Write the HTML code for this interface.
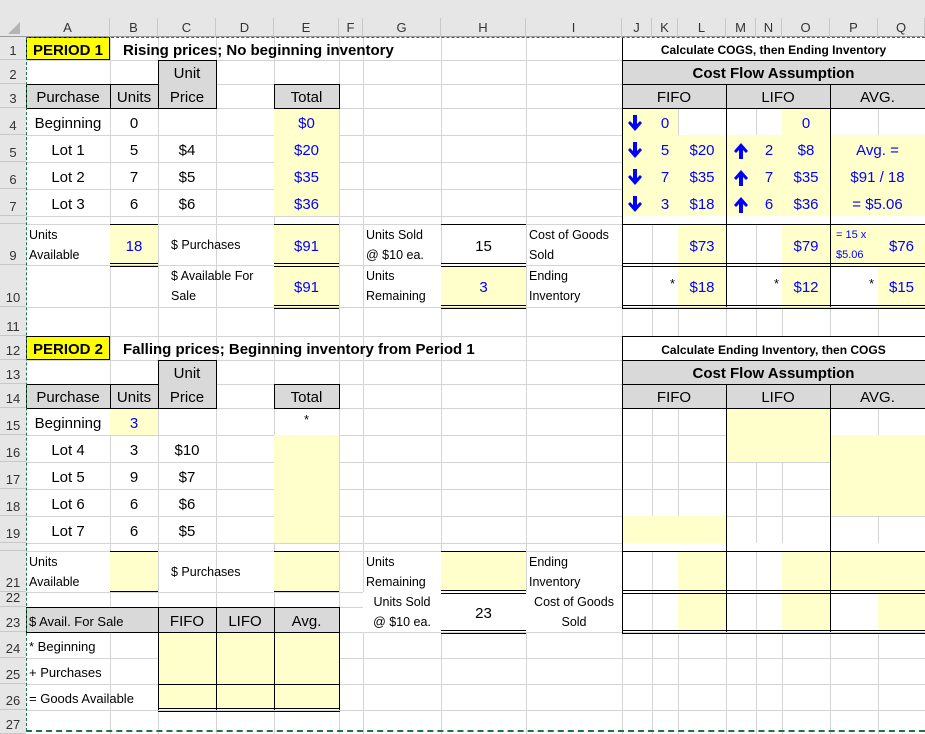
<!DOCTYPE html>
<html><head><meta charset="utf-8"><style>
*{margin:0;padding:0;box-sizing:border-box}
body{width:925px;height:734px;position:relative;overflow:hidden;background:#fff;font-family:"Liberation Sans",Arial,sans-serif;color:#000}
div{position:absolute}
.v{width:1px;background:#d4d4d4;top:37px;height:697px}
.h{height:1px;background:#d4d4d4;left:0;width:925px}
.c{display:flex;align-items:center;justify-content:center;font-size:15px;white-space:nowrap;padding-top:3px}
.l{justify-content:flex-start;padding-left:3px}
.s{font-size:12.5px;line-height:20px;white-space:pre;justify-content:flex-start;padding-left:3px;padding-top:0}
.b{color:#0000ff}
.y{background:#ffffcc}
.g{background:#d9d9d9}
.bx{border:1px solid #000}
.k{background:#000}
.dbl{border-top:1px solid #000;border-bottom:1px solid #000;height:4px}
.ch{top:18px;height:19px;font-size:13px;color:#333;display:flex;align-items:center;justify-content:center;border-right:1px solid #c8c8c8}
.rn{left:0;width:26px;font-size:13px;color:#333;display:flex;align-items:flex-end;justify-content:center;padding-bottom:1px;border-bottom:1px solid #c8c8c8;background:#e6e6e6}
</style></head><body>
<div style="left:0;top:0;width:925px;height:37px;background:#e6e6e6;border-bottom:1px solid #9a9a9a"></div>
<div style="left:0;top:37px;width:26px;height:697px;background:#e6e6e6"></div>

<div class="v" style="left:110px"></div><div class="v" style="left:158px"></div><div class="v" style="left:216px"></div><div class="v" style="left:274px"></div><div class="v" style="left:339px"></div><div class="v" style="left:363px"></div><div class="v" style="left:441px"></div><div class="v" style="left:526px"></div><div class="v" style="left:622px"></div><div class="v" style="left:652px"></div><div class="v" style="left:678px"></div><div class="v" style="left:726px"></div><div class="v" style="left:756px"></div><div class="v" style="left:782px"></div><div class="v" style="left:830px"></div><div class="v" style="left:878px"></div>
<div class="h" style="top:60px"></div><div class="h" style="top:84px"></div><div class="h" style="top:108px"></div><div class="h" style="top:135px"></div><div class="h" style="top:162px"></div><div class="h" style="top:189px"></div><div class="h" style="top:216px"></div><div class="h" style="top:224px"></div><div class="h" style="top:265px"></div><div class="h" style="top:307px"></div><div class="h" style="top:336px"></div><div class="h" style="top:360px"></div><div class="h" style="top:384px"></div><div class="h" style="top:408px"></div><div class="h" style="top:435px"></div><div class="h" style="top:462px"></div><div class="h" style="top:489px"></div><div class="h" style="top:516px"></div><div class="h" style="top:543px"></div><div class="h" style="top:551px"></div><div class="h" style="top:592px"></div><div class="h" style="top:607px"></div><div class="h" style="top:632px"></div><div class="h" style="top:658px"></div><div class="h" style="top:684px"></div><div class="h" style="top:710px"></div>

<div class="ch" style="left:26px;width:84px">A</div><div class="ch" style="left:110px;width:48px">B</div><div class="ch" style="left:158px;width:58px">C</div><div class="ch" style="left:216px;width:58px">D</div><div class="ch" style="left:274px;width:65px">E</div><div class="ch" style="left:339px;width:24px">F</div><div class="ch" style="left:363px;width:78px">G</div><div class="ch" style="left:441px;width:85px">H</div><div class="ch" style="left:526px;width:96px">I</div><div class="ch" style="left:622px;width:30px">J</div><div class="ch" style="left:652px;width:26px">K</div><div class="ch" style="left:678px;width:48px">L</div><div class="ch" style="left:726px;width:30px">M</div><div class="ch" style="left:756px;width:26px">N</div><div class="ch" style="left:782px;width:48px">O</div><div class="ch" style="left:830px;width:48px">P</div><div class="ch" style="left:878px;width:47px">Q</div>
<div style="left:8px;top:22px;width:0;height:0;border-left:12px solid transparent;border-bottom:12px solid #b4b4b4"></div>

<div class="rn" style="top:37px;height:23px">1</div><div class="rn" style="top:60px;height:24px">2</div><div class="rn" style="top:84px;height:24px">3</div><div class="rn" style="top:108px;height:27px">4</div><div class="rn" style="top:135px;height:27px">5</div><div class="rn" style="top:162px;height:27px">6</div><div class="rn" style="top:189px;height:27px">7</div><div class="rn" style="top:216px;height:8px"></div><div class="rn" style="top:224px;height:41px">9</div><div class="rn" style="top:265px;height:42px">10</div><div class="rn" style="top:307px;height:29px">11</div><div class="rn" style="top:336px;height:24px">12</div><div class="rn" style="top:360px;height:24px">13</div><div class="rn" style="top:384px;height:24px">14</div><div class="rn" style="top:408px;height:27px">15</div><div class="rn" style="top:435px;height:27px">16</div><div class="rn" style="top:462px;height:27px">17</div><div class="rn" style="top:489px;height:27px">18</div><div class="rn" style="top:516px;height:27px">19</div><div class="rn" style="top:543px;height:8px"></div><div class="rn" style="top:551px;height:41px">21</div><div class="rn" style="top:592px;height:15px">22</div><div class="rn" style="top:607px;height:25px">23</div><div class="rn" style="top:632px;height:26px">24</div><div class="rn" style="top:658px;height:26px">25</div><div class="rn" style="top:684px;height:26px">26</div><div class="rn" style="top:710px;height:24px">27</div>

<div class="y" style="left:274px;top:108px;width:65px;height:108px"></div>
<div class="y" style="left:110px;top:224px;width:48px;height:41px"></div>
<div class="y" style="left:274px;top:224px;width:65px;height:83px"></div>
<div class="y" style="left:441px;top:265px;width:85px;height:42px"></div>
<div class="y" style="left:622px;top:108px;width:56px;height:27px"></div>
<div class="y" style="left:622px;top:135px;width:104px;height:81px"></div>
<div class="y" style="left:782px;top:108px;width:48px;height:27px"></div>
<div class="y" style="left:726px;top:135px;width:104px;height:81px"></div>
<div class="y" style="left:830px;top:135px;width:95px;height:81px"></div>
<div style="left:622px;top:216px;width:303px;height:8px;background:#fff"></div>
<div style="left:622px;top:224px;width:303px;height:83px;background:#fff"></div>
<div class="y" style="left:678px;top:224px;width:48px;height:83px"></div>
<div class="y" style="left:782px;top:224px;width:48px;height:83px"></div>
<div class="y" style="left:830px;top:224px;width:95px;height:41px"></div>
<div class="y" style="left:878px;top:265px;width:47px;height:42px"></div>
<div style="left:652px;top:224px;width:1px;height:83px;background:#d4d4d4"></div>
<div style="left:756px;top:224px;width:1px;height:83px;background:#d4d4d4"></div>
<div style="left:622px;top:37px;width:303px;height:23px;background:#fff"></div>

<div style="left:26px;top:37px;width:84px;height:23px;background:#ffff00;border:1px solid #000"></div>
<div class="g bx" style="left:26px;top:84px;width:85px;height:25px"></div>
<div class="g bx" style="left:110px;top:84px;width:49px;height:25px"></div>
<div class="g bx" style="left:158px;top:60px;width:59px;height:49px"></div>
<div class="g bx" style="left:274px;top:84px;width:66px;height:25px"></div>
<div class="g" style="left:622px;top:60px;width:303px;height:48px"></div>
<div class="k" style="left:622px;top:37px;width:1px;height:272px"></div>
<div class="k" style="left:622px;top:60px;width:303px;height:1px"></div>
<div class="k" style="left:622px;top:84px;width:303px;height:1px"></div>
<div class="k" style="left:622px;top:108px;width:303px;height:1px"></div>
<div class="k" style="left:726px;top:84px;width:1px;height:223px"></div>
<div class="k" style="left:830px;top:84px;width:1px;height:223px"></div>
<div class="k" style="left:622px;top:224px;width:303px;height:1px"></div>
<div class="k" style="left:110px;top:224px;width:48px;height:1px"></div>
<div class="k" style="left:274px;top:224px;width:65px;height:1px"></div>
<div class="k" style="left:441px;top:224px;width:85px;height:1px"></div>
<div class="dbl" style="left:110px;top:263px;width:48px"></div>
<div class="dbl" style="left:274px;top:263px;width:65px"></div>
<div class="dbl" style="left:441px;top:263px;width:85px"></div>
<div class="dbl" style="left:622px;top:263px;width:303px"></div>
<div class="dbl" style="left:274px;top:305px;width:65px"></div>
<div class="dbl" style="left:441px;top:305px;width:85px"></div>
<div class="dbl" style="left:622px;top:305px;width:303px"></div>

<div class="c" style="left:26px;top:37px;width:84px;height:23px;font-weight:bold;font-size:15px">PERIOD 1</div>
<div class="c l" style="left:120px;top:37px;height:23px;font-weight:bold;font-size:15px">Rising prices; No beginning inventory</div>
<div class="c" style="left:622px;top:37px;width:303px;height:23px;font-weight:bold;font-size:12px">Calculate COGS, then Ending Inventory</div>
<div class="c" style="left:158px;top:60px;width:58px;height:24px">Unit</div>
<div class="c" style="left:622px;top:60px;width:303px;height:24px;font-weight:bold">Cost Flow Assumption</div>
<div class="c" style="left:26px;top:84px;width:84px;height:24px">Purchase</div>
<div class="c" style="left:110px;top:84px;width:48px;height:24px">Units</div>
<div class="c" style="left:158px;top:84px;width:58px;height:24px">Price</div>
<div class="c" style="left:274px;top:84px;width:65px;height:24px">Total</div>
<div class="c" style="left:622px;top:84px;width:104px;height:24px">FIFO</div>
<div class="c" style="left:726px;top:84px;width:104px;height:24px">LIFO</div>
<div class="c" style="left:830px;top:84px;width:95px;height:24px">AVG.</div>

<div class="c" style="left:26px;top:108px;width:84px;height:27px">Beginning</div>
<div class="c" style="left:110px;top:108px;width:48px;height:27px">0</div>
<div class="c b" style="left:274px;top:108px;width:65px;height:27px">$0</div>
<div class="c" style="left:26px;top:135px;width:84px;height:27px">Lot 1</div>
<div class="c" style="left:110px;top:135px;width:48px;height:27px">5</div>
<div class="c" style="left:158px;top:135px;width:58px;height:27px">$4</div>
<div class="c b" style="left:274px;top:135px;width:65px;height:27px">$20</div>
<div class="c" style="left:26px;top:162px;width:84px;height:27px">Lot 2</div>
<div class="c" style="left:110px;top:162px;width:48px;height:27px">7</div>
<div class="c" style="left:158px;top:162px;width:58px;height:27px">$5</div>
<div class="c b" style="left:274px;top:162px;width:65px;height:27px">$35</div>
<div class="c" style="left:26px;top:189px;width:84px;height:27px">Lot 3</div>
<div class="c" style="left:110px;top:189px;width:48px;height:27px">6</div>
<div class="c" style="left:158px;top:189px;width:58px;height:27px">$6</div>
<div class="c b" style="left:274px;top:189px;width:65px;height:27px">$36</div>

<svg style="position:absolute;left:0;top:0" width="925" height="734">
<g fill="#0000ff">
<path d="M633 115h4v9l3-3 2 2-7 8-7-8 2-2 3 3z"/>
<path d="M633 142h4v9l3-3 2 2-7 8-7-8 2-2 3 3z"/>
<path d="M633 169h4v9l3-3 2 2-7 8-7-8 2-2 3 3z"/>
<path d="M633 196h4v9l3-3 2 2-7 8-7-8 2-2 3 3z"/>
<path d="M739 159h4v-9l3 3 2-2-7-8-7 8 2 2 3-3z"/>
<path d="M739 186h4v-9l3 3 2-2-7-8-7 8 2 2 3-3z"/>
<path d="M739 213h4v-9l3 3 2-2-7-8-7 8 2 2 3-3z"/>
</g></svg>
<div class="c b" style="left:652px;top:108px;width:26px;height:27px">0</div>
<div class="c b" style="left:782px;top:108px;width:48px;height:27px">0</div>
<div class="c b" style="left:652px;top:135px;width:26px;height:27px">5</div>
<div class="c b" style="left:678px;top:135px;width:48px;height:27px">$20</div>
<div class="c b" style="left:756px;top:135px;width:26px;height:27px">2</div>
<div class="c b" style="left:782px;top:135px;width:48px;height:27px">$8</div>
<div class="c b" style="left:830px;top:135px;width:95px;height:27px">Avg. =</div>
<div class="c b" style="left:652px;top:162px;width:26px;height:27px">7</div>
<div class="c b" style="left:678px;top:162px;width:48px;height:27px">$35</div>
<div class="c b" style="left:756px;top:162px;width:26px;height:27px">7</div>
<div class="c b" style="left:782px;top:162px;width:48px;height:27px">$35</div>
<div class="c b" style="left:830px;top:162px;width:95px;height:27px">$91 / 18</div>
<div class="c b" style="left:652px;top:189px;width:26px;height:27px">3</div>
<div class="c b" style="left:678px;top:189px;width:48px;height:27px">$18</div>
<div class="c b" style="left:756px;top:189px;width:26px;height:27px">6</div>
<div class="c b" style="left:782px;top:189px;width:48px;height:27px">$36</div>
<div class="c b" style="left:830px;top:189px;width:95px;height:27px">= $5.06</div>

<div class="c s" style="left:26px;top:224px;height:41px">Units
Available</div>
<div class="c b" style="left:110px;top:224px;width:48px;height:41px">18</div>
<div class="c s" style="left:168px;top:224px;height:41px">$ Purchases</div>
<div class="c b" style="left:274px;top:224px;width:65px;height:41px">$91</div>
<div class="c s" style="left:363px;top:224px;height:41px">Units Sold
@ $10 ea.</div>
<div class="c" style="left:441px;top:224px;width:85px;height:41px">15</div>
<div class="c s" style="left:526px;top:224px;height:41px">Cost of Goods
Sold</div>
<div class="c b" style="left:678px;top:224px;width:48px;height:41px">$73</div>
<div class="c b" style="left:782px;top:224px;width:48px;height:41px">$79</div>
<div class="c s b" style="left:834px;top:224px;height:41px;font-size:11px;padding-left:2px">= 15 x
$5.06</div>
<div class="c b" style="left:878px;top:224px;width:47px;height:41px">$76</div>

<div class="c s" style="left:168px;top:265px;height:42px">$ Available For
Sale</div>
<div class="c b" style="left:274px;top:265px;width:65px;height:42px">$91</div>
<div class="c s" style="left:363px;top:265px;height:42px">Units
Remaining</div>
<div class="c b" style="left:441px;top:265px;width:85px;height:42px">3</div>
<div class="c s" style="left:526px;top:265px;height:42px">Ending
Inventory</div>
<div class="c" style="left:652px;top:270px;width:26px;height:24px;font-size:13px;justify-content:flex-end;padding-right:3px">*</div>
<div class="c b" style="left:678px;top:265px;width:48px;height:42px">$18</div>
<div class="c" style="left:756px;top:270px;width:26px;height:24px;font-size:13px;justify-content:flex-end;padding-right:3px">*</div>
<div class="c b" style="left:782px;top:265px;width:48px;height:42px">$12</div>
<div class="c" style="left:830px;top:270px;width:48px;height:24px;font-size:13px;justify-content:flex-end;padding-right:4px">*</div>
<div class="c b" style="left:878px;top:265px;width:47px;height:42px">$15</div>

<div class="y" style="left:110px;top:408px;width:48px;height:27px"></div>
<div class="y" style="left:274px;top:435px;width:65px;height:108px"></div>
<div style="left:622px;top:336px;width:303px;height:24px;background:#fff"></div>
<div class="y" style="left:726px;top:408px;width:104px;height:54px"></div>
<div class="y" style="left:830px;top:435px;width:95px;height:81px"></div>
<div class="y" style="left:622px;top:516px;width:104px;height:27px"></div>
<div style="left:622px;top:543px;width:303px;height:8px;background:#fff"></div>
<div class="y" style="left:110px;top:551px;width:48px;height:41px"></div>
<div class="y" style="left:274px;top:551px;width:65px;height:41px"></div>
<div class="y" style="left:441px;top:551px;width:85px;height:41px"></div>
<div style="left:526px;top:592px;width:96px;height:40px;background:#fff"></div>
<div style="left:363px;top:592px;width:78px;height:40px;background:#fff"></div>
<div style="left:441px;top:592px;width:85px;height:40px;background:#fff"></div>
<div style="left:622px;top:551px;width:303px;height:81px;background:#fff"></div>
<div class="y" style="left:678px;top:551px;width:48px;height:81px"></div>
<div class="y" style="left:782px;top:551px;width:48px;height:81px"></div>
<div class="y" style="left:830px;top:551px;width:95px;height:41px"></div>
<div class="y" style="left:878px;top:592px;width:47px;height:40px"></div>
<div style="left:652px;top:551px;width:1px;height:81px;background:#d4d4d4"></div>
<div style="left:756px;top:551px;width:1px;height:81px;background:#d4d4d4"></div>
<div class="y" style="left:158px;top:632px;width:181px;height:78px"></div>

<div style="left:26px;top:336px;width:84px;height:24px;background:#ffff00;border:1px solid #000"></div>
<div class="g bx" style="left:26px;top:384px;width:85px;height:25px"></div>
<div class="g bx" style="left:110px;top:384px;width:49px;height:25px"></div>
<div class="g bx" style="left:158px;top:360px;width:59px;height:49px"></div>
<div class="g bx" style="left:274px;top:384px;width:66px;height:25px"></div>
<div class="g" style="left:622px;top:360px;width:303px;height:48px"></div>
<div class="g bx" style="left:26px;top:607px;width:133px;height:26px"></div>
<div class="g bx" style="left:158px;top:607px;width:59px;height:26px"></div>
<div class="g bx" style="left:216px;top:607px;width:59px;height:26px"></div>
<div class="g bx" style="left:274px;top:607px;width:66px;height:26px"></div>

<div class="k" style="left:622px;top:336px;width:303px;height:1px"></div>
<div class="k" style="left:622px;top:336px;width:1px;height:297px"></div>
<div class="k" style="left:622px;top:360px;width:303px;height:1px"></div>
<div class="k" style="left:622px;top:384px;width:303px;height:1px"></div>
<div class="k" style="left:622px;top:408px;width:303px;height:1px"></div>
<div class="k" style="left:726px;top:384px;width:1px;height:248px"></div>
<div class="k" style="left:830px;top:384px;width:1px;height:248px"></div>
<div class="k" style="left:622px;top:551px;width:303px;height:1px"></div>
<div class="k" style="left:110px;top:551px;width:48px;height:1px"></div>
<div class="k" style="left:274px;top:551px;width:65px;height:1px"></div>
<div class="k" style="left:441px;top:551px;width:85px;height:1px"></div>
<div class="k" style="left:110px;top:591px;width:48px;height:1px"></div>
<div class="k" style="left:274px;top:591px;width:65px;height:1px"></div>
<div class="dbl" style="left:441px;top:590px;width:85px"></div>
<div class="dbl" style="left:622px;top:590px;width:303px"></div>
<div class="dbl" style="left:441px;top:630px;width:85px"></div>
<div class="dbl" style="left:622px;top:630px;width:303px"></div>
<div class="k" style="left:158px;top:632px;width:1px;height:78px"></div>
<div class="k" style="left:216px;top:632px;width:1px;height:78px"></div>
<div class="k" style="left:274px;top:632px;width:1px;height:78px"></div>
<div class="k" style="left:339px;top:632px;width:1px;height:78px"></div>
<div class="k" style="left:158px;top:684px;width:181px;height:1px"></div>
<div class="dbl" style="left:158px;top:708px;width:182px"></div>

<div class="c" style="left:26px;top:336px;width:84px;height:24px;font-weight:bold">PERIOD 2</div>
<div class="c l" style="left:120px;top:336px;height:24px;font-weight:bold">Falling prices; Beginning inventory from Period 1</div>
<div class="c" style="left:622px;top:336px;width:303px;height:24px;font-weight:bold;font-size:12px">Calculate Ending Inventory, then COGS</div>
<div class="c" style="left:158px;top:360px;width:58px;height:24px">Unit</div>
<div class="c" style="left:622px;top:360px;width:303px;height:24px;font-weight:bold">Cost Flow Assumption</div>
<div class="c" style="left:26px;top:384px;width:84px;height:24px">Purchase</div>
<div class="c" style="left:110px;top:384px;width:48px;height:24px">Units</div>
<div class="c" style="left:158px;top:384px;width:58px;height:24px">Price</div>
<div class="c" style="left:274px;top:384px;width:65px;height:24px">Total</div>
<div class="c" style="left:622px;top:384px;width:104px;height:24px">FIFO</div>
<div class="c" style="left:726px;top:384px;width:104px;height:24px">LIFO</div>
<div class="c" style="left:830px;top:384px;width:95px;height:24px">AVG.</div>

<div class="c" style="left:26px;top:408px;width:84px;height:27px">Beginning</div>
<div class="c b" style="left:110px;top:408px;width:48px;height:27px">3</div>
<div class="c" style="left:274px;top:410px;width:65px;height:16px;font-size:13px">*</div>
<div class="c" style="left:26px;top:435px;width:84px;height:27px">Lot 4</div>
<div class="c" style="left:110px;top:435px;width:48px;height:27px">3</div>
<div class="c" style="left:158px;top:435px;width:58px;height:27px">$10</div>
<div class="c" style="left:26px;top:462px;width:84px;height:27px">Lot 5</div>
<div class="c" style="left:110px;top:462px;width:48px;height:27px">9</div>
<div class="c" style="left:158px;top:462px;width:58px;height:27px">$7</div>
<div class="c" style="left:26px;top:489px;width:84px;height:27px">Lot 6</div>
<div class="c" style="left:110px;top:489px;width:48px;height:27px">6</div>
<div class="c" style="left:158px;top:489px;width:58px;height:27px">$6</div>
<div class="c" style="left:26px;top:516px;width:84px;height:27px">Lot 7</div>
<div class="c" style="left:110px;top:516px;width:48px;height:27px">6</div>
<div class="c" style="left:158px;top:516px;width:58px;height:27px">$5</div>

<div class="c s" style="left:26px;top:551px;height:41px">Units
Available</div>
<div class="c s" style="left:168px;top:551px;height:41px">$ Purchases</div>
<div class="c s" style="left:363px;top:551px;height:41px">Units
Remaining</div>
<div class="c s" style="left:526px;top:551px;height:41px">Ending
Inventory</div>
<div class="c s" style="left:363px;top:592px;width:78px;height:40px;justify-content:center;text-align:center;padding-left:0">Units Sold
@ $10 ea.</div>
<div class="c" style="left:441px;top:592px;width:85px;height:40px">23</div>
<div class="c s" style="left:526px;top:592px;width:96px;height:40px;justify-content:center;text-align:center;padding-left:0">Cost of Goods
Sold</div>

<div class="c l" style="left:26px;top:607px;height:25px;font-size:13px">$ Avail. For Sale</div>
<div class="c" style="left:158px;top:607px;width:58px;height:25px">FIFO</div>
<div class="c" style="left:216px;top:607px;width:58px;height:25px">LIFO</div>
<div class="c" style="left:274px;top:607px;width:65px;height:25px">Avg.</div>
<div class="c l" style="left:26px;top:632px;height:26px;font-size:13px">* Beginning</div>
<div class="c l" style="left:26px;top:658px;height:26px;font-size:13px">+ Purchases</div>
<div class="c l" style="left:26px;top:684px;height:26px;font-size:13px">= Goods Available</div>

<div style="left:26px;top:37px;width:899px;height:0;border-top:1px dashed #217346"></div>
<div style="left:26px;top:37px;width:0;height:694px;border-left:1px dashed #217346"></div>
<div style="left:26px;top:730px;width:899px;height:0;border-top:2px dashed #217346"></div>
</body></html>
